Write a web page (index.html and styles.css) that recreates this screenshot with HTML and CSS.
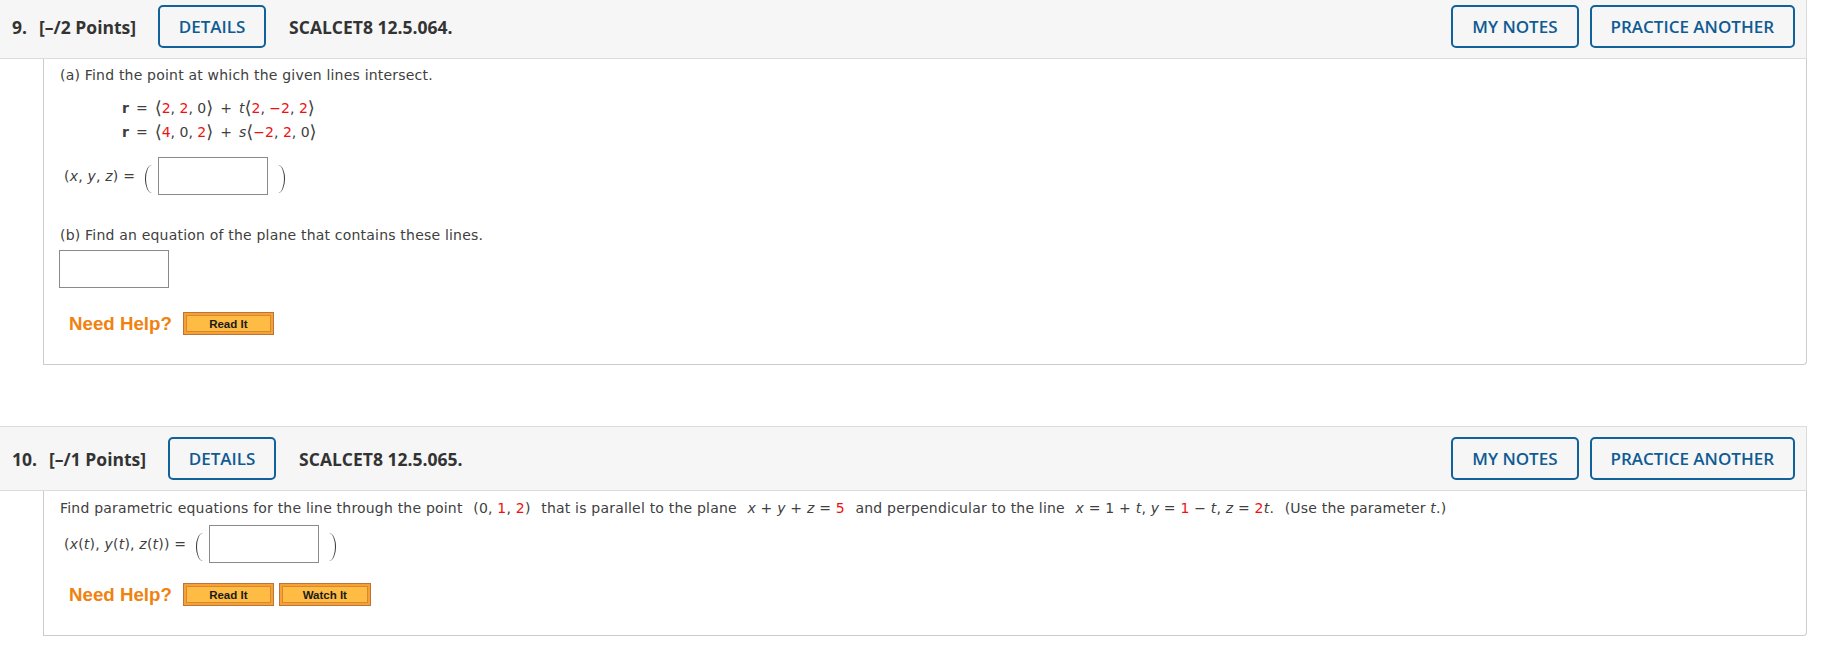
FILE: index.html
```html
<!DOCTYPE html>
<html>
<head>
<meta charset="utf-8">
<link rel="stylesheet" href="styles.css">
</head>
<body>
<div class="page">
  <section class="question q9">
    <div class="qhead">
      <span class="qnum">9.</span>
      <span class="qpts">[–/2 Points]</span>
      <button class="btn details">DETAILS</button>
      <span class="qcode">SCALCET8 12.5.064.</span>
      <span class="spacer"></span>
      <button class="btn">MY NOTES</button>
      <button class="btn practice">PRACTICE ANOTHER</button>
    </div>
    <div class="qbody">
      <p class="line">(a) Find the point at which the given lines intersect.</p>
      <div class="eqs">
        <div class="eq"><b class="vec">r</b><span class="op">=</span><span class="ang">⟨</span><span class="red">2</span>, <span class="red">2</span>, 0<span class="ang">⟩</span><span class="op">+</span><i>t</i><span class="ang">⟨</span><span class="red">2</span>, <span class="red">−2</span>, <span class="red">2</span><span class="ang">⟩</span></div>
        <div class="eq"><b class="vec">r</b><span class="op">=</span><span class="ang">⟨</span><span class="red">4</span>, 0, <span class="red">2</span><span class="ang">⟩</span><span class="op">+</span><i>s</i><span class="ang">⟨</span><span class="red">−2</span>, <span class="red">2</span>, 0<span class="ang">⟩</span></div>
      </div>
      <div class="answer ans-a">
        <span class="lbl">(<i>x</i>, <i>y</i>, <i>z</i>) =</span>
        <span class="paren left"></span>
        <span class="box"></span>
        <span class="paren right"></span>
      </div>
      <p class="line part-b">(b) Find an equation of the plane that contains these lines.</p>
      <div class="box solo"></div>
      <div class="help help-9">
        <span class="need">Need Help?</span>
        <span class="obtn"><span class="oin">Read It</span></span>
      </div>
    </div>
  </section>

  <section class="question q10">
    <div class="qhead">
      <span class="qnum">10.</span>
      <span class="qpts">[–/1 Points]</span>
      <button class="btn details">DETAILS</button>
      <span class="qcode">SCALCET8 12.5.065.</span>
      <span class="spacer"></span>
      <button class="btn">MY NOTES</button>
      <button class="btn practice">PRACTICE ANOTHER</button>
    </div>
    <div class="qbody">
      <p class="line">Find parametric equations for the line through the point <span class="m">(0, <span class="red">1</span>, <span class="red">2</span>)</span> that is parallel to the plane <span class="m"><i>x</i> + <i>y</i> + <i>z</i> = <span class="red">5</span></span> and perpendicular to the line <span class="m"><i>x</i> = 1 + <i>t</i>, <i>y</i> = <span class="red">1</span> − <i>t</i>, <i>z</i> = <span class="red">2</span><i>t</i>.</span> (Use the parameter <i>t</i>.)</p>
      <div class="answer ans-10">
        <span class="lbl">(<i>x</i>(<i>t</i>), <i>y</i>(<i>t</i>), <i>z</i>(<i>t</i>)) =</span>
        <span class="paren left"></span>
        <span class="box"></span>
        <span class="paren right"></span>
      </div>
      <div class="help help-10">
        <span class="need">Need Help?</span>
        <span class="obtn"><span class="oin">Read It</span></span>
        <span class="obtn watch"><span class="oin">Watch It</span></span>
      </div>
    </div>
  </section>
</div>
</body>
</html>
```

FILE: styles.css
```css
html, body {
  margin: 0;
  padding: 0;
  background: #ffffff;
}
.page {
  width: 1807px;
  margin-top: -6px;
}
.question {
  margin-bottom: 61px;
}
.qhead {
  display: flex;
  align-items: center;
  background: #f6f6f6;
  border: 1px solid #dcdcdc;
  border-left: none;
  padding: 10px 11px 10px 12px;
  font-family: "Open Sans", "Liberation Sans", sans-serif;
  color: #333333;
}
.qnum, .qpts, .qcode {
  font-weight: 700;
  font-size: 17.5px;
}
.qnum { margin-right: 12px; }
.qpts { margin-right: 22px; }
.qcode { margin-left: 23px; }
.spacer { flex: 1; }
.btn {
  box-sizing: border-box;
  height: 43px;
  padding: 0 19px;
  background: transparent;
  border: 2px solid #11619a;
  border-radius: 5px;
  color: #0f5b92;
  font-family: "Open Sans", "Liberation Sans", sans-serif;
  font-weight: 600;
  font-size: 17px;
  margin-left: 11px;
}
.details { margin-left: 0; width: 108px; padding: 0; }
.qbody {
  margin-left: 43px;
  border: 1px solid #cccccc;
  border-top: none;
  border-radius: 0 0 4px 0;
  padding: 8px 16px 29px 16px;
  font-family: "DejaVu Sans", Verdana, sans-serif;
  font-size: 14px;
  letter-spacing: 0.2px;
  color: #404040;
}
.line {
  margin: 0;
  line-height: 16px;
  white-space: nowrap;
}
.red { color: #ee1111; }
i { font-style: italic; }
.eqs {
  margin: 13px 0 0 62px;
}
.eq {
  line-height: 24px;
  height: 24px;
  white-space: nowrap;
  letter-spacing: 0;
}
.vec { font-weight: 700; }
.op { margin: 0 7px; }
.ang { font-size: 18px; margin: 0; line-height: 16px; vertical-align: -1px; }
.answer {
  display: flex;
  align-items: center;
  height: 38px;
  margin-left: 4px;
}
.ans-a { margin-top: 13px; }
.lbl { white-space: nowrap; }
.paren {
  display: block;
  width: 7px;
  height: 28px;
  box-sizing: border-box;
  margin-top: 6px;
}
.paren.left {
  border-left: 1.5px solid #333;
  border-radius: 100% 0 0 100% / 50% 0 0 50%;
  margin-left: 10px;
  margin-right: 6px;
}
.paren.right {
  border-right: 1.5px solid #333;
  border-radius: 0 100% 100% 0 / 0 50% 50% 0;
  margin-left: 10px;
}
.box {
  display: block;
  box-sizing: border-box;
  width: 110px;
  height: 38px;
  border: 1px solid #8a8a8a;
  background: #fff;
}
.part-b { margin-top: 32px; }
.box.solo { margin-top: 7px; margin-left: -1px; }
.help {
  display: flex;
  align-items: center;
  height: 23px;
  margin-left: 9px;
}
.help-9 { margin-top: 24px; }
.help-10 { margin-top: 20px; }
.need {
  font-family: "Liberation Sans", Arial, sans-serif;
  font-weight: 700;
  font-size: 18.7px;
  letter-spacing: 0;
  color: #f0820f;
  margin-right: 11px;
}
.obtn {
  display: block;
  box-sizing: border-box;
  width: 91px;
  height: 23px;
  border: 1px solid #b9753a;
  background: #f7a035;
  padding: 2px;
}
.obtn.watch { margin-left: 5px; width: 92px; }
.oin {
  display: flex;
  align-items: center;
  justify-content: center;
  box-sizing: border-box;
  height: 100%;
  border: 1px solid #d9892b;
  background: #ffbc45;
  font-family: "Liberation Sans", Arial, sans-serif;
  font-weight: 700;
  font-size: 11.5px;
  letter-spacing: 0;
  color: #1a1a1a;
}
.q10 .qbody { padding-top: 9px; }
.ans-10 { margin-top: 9px; }
.m { margin: 0 6px; }
```
